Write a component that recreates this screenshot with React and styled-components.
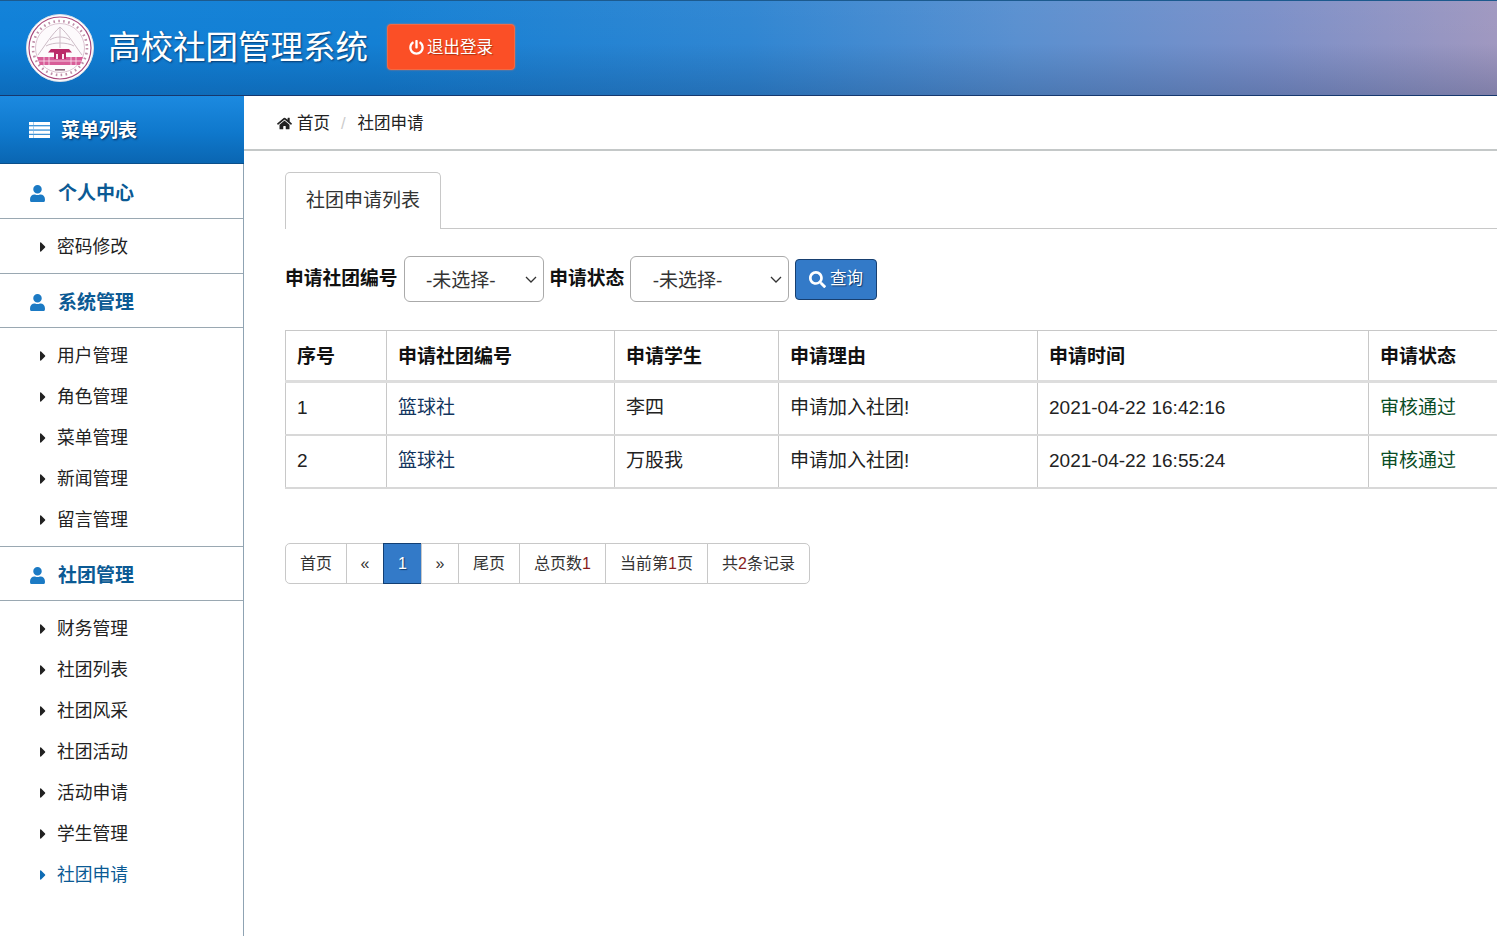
import React from "react";
import styled, { createGlobalStyle } from "styled-components";
import { FaHome, FaUser, FaCaretRight, FaSearch, FaPowerOff } from "react-icons/fa";

const Global = createGlobalStyle`
  html, body { margin: 0; padding: 0; height: 100%; overflow: hidden; background: #fff; }
  body { font-family: "Liberation Sans", "Noto Sans CJK SC", sans-serif; color: #222; line-height: 1.2; }
  * { box-sizing: border-box; }
`;

const Page = styled.div`
  width: 100%;
  height: 936px;
  display: flex;
  flex-direction: column;
  overflow: hidden;
`;

const Header = styled.header`
  height: 96px;
  flex: none;
  display: flex;
  align-items: center;
  padding: 0 0 1px 26px;
  border-top: 1px solid #1c5a8e;
  border-bottom: 1px solid #16386e;
  background:
    linear-gradient(180deg, rgba(255,255,255,.02) 0%, rgba(0,20,60,0) 45%, rgba(0,25,70,.2) 100%),
    linear-gradient(90deg, #0f80d8 0%, #1480d4 25%, #3086d2 50%, #5a90d0 68%, #7c90c8 85%, #a098c0 100%);
`;

const Title = styled.h1`
  margin: 0 19px 0 14px;
  font-size: 32.5px;
  line-height: 40px;
  font-weight: 400;
  color: #fff;
  white-space: nowrap;
  text-shadow: 1px 1px 2px rgba(0, 30, 70, .7);
`;

const Logout = styled.button`
  width: 128px;
  height: 46px;
  margin-top: -2px;
  border: 1px solid #f06a45;
  border-radius: 4px;
  background: #fb4f26;
  color: #fff;
  font: inherit;
  font-size: 16.5px;
  display: flex;
  align-items: center;
  justify-content: center;
  gap: 3px;
  padding: 2px 0 0;
  text-shadow: 1px 1px 1px rgba(120, 30, 0, .6);
  box-shadow: 0 0 2px rgba(255, 120, 80, .7);
`;

const Body = styled.div`
  flex: 1;
  display: flex;
  min-height: 0;
`;

const Sidebar = styled.aside`
  width: 244px;
  flex: none;
  border-right: 1px solid #8fa3b3;
`;

const MenuHead = styled.div`
  height: 68px;
  display: flex;
  align-items: center;
  gap: 11px;
  padding: 4px 0 0 29px;
  margin-right: -1px;
  color: #fff;
  font-size: 19px;
  font-weight: 700;
  background: linear-gradient(180deg, #1c8ae0 0%, #0f78cc 55%, #0a66b2 100%);
  border-bottom: 1px solid #0b4f8a;
  text-shadow: 1px 1px 2px rgba(0, 30, 70, .9);
  svg { margin-top: -3px; }
`;

const Groups = styled.div`
  padding-top: 1px;
`;

const GroupTitle = styled.div`
  height: 54px;
  display: flex;
  align-items: center;
  gap: 12px;
  padding: 5px 0 0 29px;
  color: #0b5a94;
  font-size: 19px;
  font-weight: 700;
  border-bottom: 1px solid #9aa8b2;
  svg { color: #1b7ac4; margin-top: -1px; }
`;

const SubList = styled.ul`
  list-style: none;
  margin: 0;
  padding: 7px 0 6px;
  border-bottom: ${(p) => (p.$last ? "none" : "1px solid #9aa8b2")};
`;

const SubItem = styled.li`
  height: 41px;
  display: flex;
  align-items: center;
  gap: 6px;
  padding: 3px 0 0 35px;
  font-size: 17.75px;
  color: ${(p) => (p.$active ? "#0b5a94" : "#222")};
  svg { margin-top: -3px; color: ${(p) => (p.$active ? "#0f6cb4" : "#222")}; }
`;

const Main = styled.main`
  flex: 1;
  min-width: 0;
  overflow: hidden;
`;

const Breadcrumb = styled.nav`
  height: 55px;
  display: flex;
  align-items: center;
  padding: 3px 0 0 33px;
  font-size: 16.5px;
  color: #222;
  border-bottom: 2px solid #c4c8c8;
`;

const HomeLink = styled.span`
  display: flex;
  align-items: center;
  gap: 5px;
`;

const Sep = styled.span`
  color: #ccc;
  margin: 0 12px 0 11px;
`;

const Content = styled.div`
  padding: 21px 0 0 41px;
`;

const Tabs = styled.div`
  height: 57px;
  border-bottom: 1px solid #c8c8c8;
  display: flex;
`;

const Tab = styled.div`
  width: 156px;
  height: 57px;
  display: flex;
  align-items: center;
  justify-content: center;
  font-size: 19px;
  color: #333;
  background: #fff;
  border: 1px solid #c8c8c8;
  border-bottom: none;
  border-radius: 5px 5px 0 0;
`;

const Filter = styled.form`
  display: flex;
  align-items: center;
  height: 46px;
  margin-top: 27px;
`;

const Label = styled.label`
  font-size: 18.75px;
  font-weight: 700;
  color: #111;
  white-space: nowrap;
  margin: 0 6px 0 0;
`;

const SelectBox = styled.span`
  position: relative;
  display: block;
  width: ${(p) => p.$w}px;
  height: 46px;
  margin-right: 5.75px;
  flex: none;
`;

const Select = styled.select`
  appearance: none;
  display: block;
  width: 100%;
  height: 100%;
  padding: 4px 0 0 21.5px;
  background: #fff;
  border: 1px solid #aaa;
  border-radius: 6px;
  color: #333;
  font: inherit;
  font-size: 19px;
`;

const Chevron = styled.svg`
  position: absolute;
  right: 7px;
  top: 20px;
  width: 12px;
  height: 7px;
  pointer-events: none;
`;

const SearchBtn = styled.button`
  width: 82px;
  height: 41px;
  display: flex;
  align-items: center;
  justify-content: center;
  gap: 4px;
  padding: 0;
  background: #337ac8;
  border: 1px solid #173f70;
  border-radius: 4px;
  color: #fff;
  font: inherit;
  font-size: 16.5px;
  text-shadow: 1px 1px 1px rgba(0, 30, 70, .7);
`;

const Table = styled.table`
  margin-top: 28px;
  width: 1243px;
  table-layout: fixed;
  border-collapse: collapse;
  font-size: 19px;
`;

const Th = styled.th`
  width: ${(p) => p.$w}px;
  height: 51px;
  padding: 3px 11px 0;
  text-align: left;
  font-weight: 700;
  color: #111;
  border: 1px solid #c8c8c8;
  border-bottom: 3px solid #ddd;
`;

const Td = styled.td`
  height: 53px;
  padding: 0 11px;
  color: ${(p) => p.$color || "#222"};
  border: 1px solid #c8c8c8;
  border-bottom: 2px solid #d8d8d8;
`;

const Pager = styled.ul`
  list-style: none;
  margin: 54px 0 0;
  padding: 0;
  display: inline-flex;
  height: 41px;
  font-size: 16px;
`;

const PageCell = styled.li`
  width: ${(p) => p.$w}px;
  display: flex;
  align-items: center;
  justify-content: center;
  padding-top: 2px;
  margin-left: -1px;
  color: ${(p) => (p.$active ? "#fff" : "#333")};
  background: ${(p) => (p.$active ? "#337ac8" : "#fff")};
  border: 1px solid ${(p) => (p.$active ? "#123f73" : "#c8c8c8")};
  text-shadow: ${(p) => (p.$active ? "1px 1px 1px rgba(0, 30, 70, .7)" : "none")};
  &:first-child { margin-left: 0; border-radius: 5px 0 0 5px; }
  &:last-child { border-radius: 0 5px 5px 0; }
`;

const Num = styled.span`
  color: #8a1c1c;
`;

const ListIcon = () => (
  <svg width="21" height="16" viewBox="0 0 21 16">
    {[0, 4.3, 8.6, 12.8].map((y) => (
      <g key={y}>
        <rect x="0" y={y} width="21" height="3.2" fill="#fff" />
        <rect x="4" y={y} width=".7" height="3.2" fill="#7fb8e6" />
      </g>
    ))}
  </svg>
);

const Logo = () => (
  <svg width="68" height="68" viewBox="0 0 68 68" style={{ flex: "none" }}>
    <circle cx="34" cy="34" r="33.5" fill="#fff" stroke="#d9dfe8" />
    <circle cx="34" cy="34" r="31" fill="none" stroke="#a8487c" strokeWidth="1.2" />
    <circle cx="34" cy="34" r="27" fill="none" stroke="#c090aa" strokeWidth="2.6" strokeDasharray="1.6 3.4" />
    <circle cx="34" cy="34" r="24.5" fill="#fdfafc" stroke="#b98aa4" strokeWidth=".5" />
    <path d="M34 13 C26 20 20 30 12 41 M34 13 C42 20 48 30 56 41 M34 13 V34 M24 26 C29 22 39 22 44 26 M20 32 C27 28 41 28 48 32" fill="none" stroke="#cdbcc7" strokeWidth="1" />
    <path d="M25 35 H43 L46 38.5 H22 Z M28 38.5 H40 V45 H28 Z" fill="#bb2a68" />
    <path d="M11 43 H28 V51 H14 Z M40 43 H57 L54 51 H40 Z M28 45 H40 V51 H28 Z" fill="#d85c98" />
    <path d="M30 40 h2 v5 h-2 Z M36 40 h2 v5 h-2 Z" fill="#fbe6f0" />
    <path d="M13 47 H55 M18 43 V51 M23 43 V51 M45 43 V51 M50 43 V51" stroke="#fbe6f0" strokeWidth=".8" />
    <rect x="29" y="55" width="10" height="1.6" fill="#8a6a7c" />
  </svg>
);

const ChevronIcon = () => (
  <Chevron viewBox="0 0 12 7">
    <path d="M1 1 L6 6 L11 1" fill="none" stroke="#333" strokeWidth="1.3" />
  </Chevron>
);

const groups = [
  { title: "个人中心", items: ["密码修改"] },
  { title: "系统管理", items: ["用户管理", "角色管理", "菜单管理", "新闻管理", "留言管理"] },
  { title: "社团管理", items: ["财务管理", "社团列表", "社团风采", "社团活动", "活动申请", "学生管理", "社团申请"], last: true },
];

const columns = [
  ["序号", 101], ["申请社团编号", 228], ["申请学生", 164], ["申请理由", 259], ["申请时间", 331], ["申请状态", 160],
];

const rows = [
  ["1", "篮球社", "李四", "申请加入社团!", "2021-04-22 16:42:16", "审核通过"],
  ["2", "篮球社", "万股我", "申请加入社团!", "2021-04-22 16:55:24", "审核通过"],
];

export default function App() {
  return (
    <Page>
      <Global />
      <Header>
        <Logo />
        <Title>高校社团管理系统</Title>
        <Logout type="button"><FaPowerOff size={15} />退出登录</Logout>
      </Header>
      <Body>
        <Sidebar>
          <MenuHead><ListIcon />菜单列表</MenuHead>
          <Groups>
            {groups.map((g) => (
              <div key={g.title}>
                <GroupTitle><FaUser size={17} />{g.title}</GroupTitle>
                <SubList $last={g.last}>
                  {g.items.map((it) => (
                    <SubItem key={it} $active={it === "社团申请"}>
                      <FaCaretRight size={16} />{it}
                    </SubItem>
                  ))}
                </SubList>
              </div>
            ))}
          </Groups>
        </Sidebar>
        <Main>
          <Breadcrumb>
            <HomeLink><FaHome size={15} />首页</HomeLink>
            <Sep>/</Sep>
            <span>社团申请</span>
          </Breadcrumb>
          <Content>
            <Tabs><Tab>社团申请列表</Tab></Tabs>
            <Filter>
              <Label>申请社团编号</Label>
              <SelectBox $w={140}><Select><option>-未选择-</option></Select><ChevronIcon /></SelectBox>
              <Label>申请状态</Label>
              <SelectBox $w={159}><Select><option>-未选择-</option></Select><ChevronIcon /></SelectBox>
              <SearchBtn type="button"><FaSearch size={17} />查询</SearchBtn>
            </Filter>
            <Table>
              <thead>
                <tr>{columns.map(([c, w]) => <Th key={c} $w={w}>{c}</Th>)}</tr>
              </thead>
              <tbody>
                {rows.map((r) => (
                  <tr key={r[0]}>
                    <Td>{r[0]}</Td>
                    <Td $color="#12355e">{r[1]}</Td>
                    <Td>{r[2]}</Td>
                    <Td>{r[3]}</Td>
                    <Td>{r[4]}</Td>
                    <Td $color="#0a4d26">{r[5]}</Td>
                  </tr>
                ))}
              </tbody>
            </Table>
            <Pager>
              <PageCell $w={62}>首页</PageCell>
              <PageCell $w={38}>«</PageCell>
              <PageCell $w={39} $active>1</PageCell>
              <PageCell $w={38}>»</PageCell>
              <PageCell $w={62}>尾页</PageCell>
              <PageCell $w={87}>总页数<Num>1</Num></PageCell>
              <PageCell $w={103}>当前第<Num>1</Num>页</PageCell>
              <PageCell $w={103}>共<Num>2</Num>条记录</PageCell>
            </Pager>
          </Content>
        </Main>
      </Body>
    </Page>
  );
}
